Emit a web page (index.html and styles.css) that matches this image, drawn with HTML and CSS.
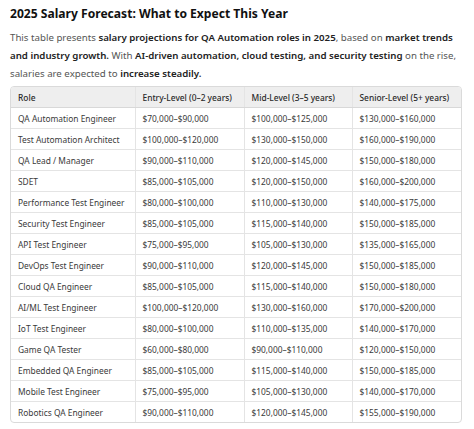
FILE: index.html
```html
<!DOCTYPE html>
<html>
<head>
<meta charset="utf-8">
<link rel="stylesheet" href="styles.css">
</head>
<body>
<div class="page">
  <h1 class="title">2025 Salary Forecast: What to Expect This Year</h1>
  <p class="intro">This table presents <b>salary projections for QA Automation roles in 2025</b>, based on <b>market trends</b> <b>and industry growth.</b> With <b>AI-driven automation, cloud testing, and security testing</b> <span>on the rise,</span> <span>salaries are expected to</span> <b>increase steadily.</b></p>
  <div class="table-wrap">
    <table class="salary">
      <colgroup>
        <col class="c1"><col class="c2"><col class="c3"><col class="c4">
      </colgroup>
      <thead>
        <tr><th>Role</th><th>Entry-Level (0–2 years)</th><th>Mid-Level (3–5 years)</th><th>Senior-Level (5+ years)</th></tr>
      </thead>
      <tbody>
        <tr><td>QA Automation Engineer</td><td>$70,000–$90,000</td><td>$100,000–$125,000</td><td>$130,000–$160,000</td></tr>
        <tr><td>Test Automation Architect</td><td>$100,000–$120,000</td><td>$130,000–$150,000</td><td>$160,000–$190,000</td></tr>
        <tr><td>QA Lead / Manager</td><td>$90,000–$110,000</td><td>$120,000–$145,000</td><td>$150,000–$180,000</td></tr>
        <tr><td>SDET</td><td>$85,000–$105,000</td><td>$120,000–$150,000</td><td>$160,000–$200,000</td></tr>
        <tr><td>Performance Test Engineer</td><td>$80,000–$100,000</td><td>$110,000–$130,000</td><td>$140,000–$175,000</td></tr>
        <tr><td>Security Test Engineer</td><td>$85,000–$105,000</td><td>$115,000–$140,000</td><td>$150,000–$185,000</td></tr>
        <tr><td>API Test Engineer</td><td>$75,000–$95,000</td><td>$105,000–$130,000</td><td>$135,000–$165,000</td></tr>
        <tr><td>DevOps Test Engineer</td><td>$90,000–$110,000</td><td>$120,000–$145,000</td><td>$150,000–$185,000</td></tr>
        <tr><td>Cloud QA Engineer</td><td>$85,000–$105,000</td><td>$115,000–$140,000</td><td>$150,000–$180,000</td></tr>
        <tr><td>AI/ML Test Engineer</td><td>$100,000–$120,000</td><td>$130,000–$160,000</td><td>$170,000–$200,000</td></tr>
        <tr><td>IoT Test Engineer</td><td>$80,000–$100,000</td><td>$110,000–$135,000</td><td>$140,000–$170,000</td></tr>
        <tr><td>Game QA Tester</td><td>$60,000–$80,000</td><td>$90,000–$110,000</td><td>$120,000–$150,000</td></tr>
        <tr><td>Embedded QA Engineer</td><td>$85,000–$105,000</td><td>$115,000–$140,000</td><td>$150,000–$185,000</td></tr>
        <tr><td>Mobile Test Engineer</td><td>$75,000–$95,000</td><td>$105,000–$130,000</td><td>$140,000–$170,000</td></tr>
        <tr><td>Robotics QA Engineer</td><td>$90,000–$110,000</td><td>$120,000–$145,000</td><td>$155,000–$190,000</td></tr>
      </tbody>
    </table>
  </div>
</div>
</body>
</html>
```

FILE: styles.css
```css
html, body {
  margin: 0;
  padding: 0;
  background: #ffffff;
}
.page {
  padding: 4px 12px 0 10px;
  font-family: "Noto Sans", "Open Sans", sans-serif;
  color: #222;
}
.title {
  margin: 0;
  font-size: 12.1px;
  font-weight: 700;
  line-height: 20px;
  color: #111;
}
.intro {
  margin: 5px 0 3px 0;
  font-size: 9.7px;
  line-height: 18px;
  color: #555;
}
.intro b {
  color: #222;
  font-weight: 600;
}
.table-wrap {
  border: 1px solid #dadada;
  border-radius: 4px;
  overflow: hidden;
  width: 450px;
}
.salary {
  width: 100%;
  border-collapse: collapse;
  table-layout: fixed;
  font-size: 8.4px;
  color: #3a3a3a;
}
.c1 { width: 124px; }
.c2 { width: 109px; }
.c3 { width: 108px; }
.c4 { width: 109px; }
.salary th, .salary td {
  height: 20px;
  padding: 0 7px;
  text-align: left;
  border-right: 1px solid #e4e4e4;
  border-bottom: 1px solid #e4e4e4;
  white-space: nowrap;
}
.salary th:last-child, .salary td:last-child { border-right: none; }
.salary tbody tr:last-child td { border-bottom: none; }
.salary th {
  background: #eeeeee;
  font-weight: 500;
  color: #2a2a2a;
  border-bottom: 1px solid #d8d8d8;
}
```
